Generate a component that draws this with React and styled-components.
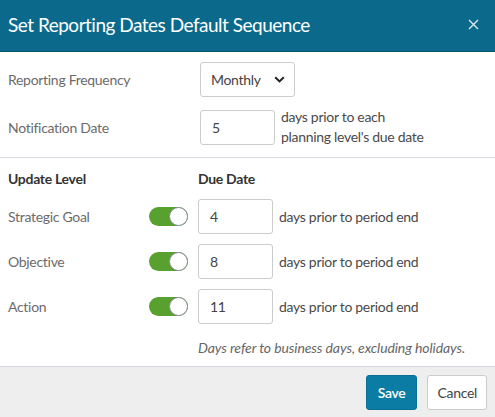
import React, { useState } from 'react';
import styled, { createGlobalStyle } from 'styled-components';

const GlobalStyle = createGlobalStyle`
  body {
    margin: 0;
    background: #fff;
    font-family: 'Source Sans Pro', Lato, 'Noto Sans', sans-serif;
    letter-spacing: -0.3px;
  }
  * {
    box-sizing: border-box;
  }
`;

const levels = [
  { name: 'Strategic Goal', days: '4' },
  { name: 'Objective', days: '8' },
  { name: 'Action', days: '11' },
];

const Toggle = ({ on, onChange }) => (
  <Switch type='button' $on={on} onClick={() => onChange(!on)}>
    <Knob $on={on} />
  </Switch>
);

const App = () => {
  const [frequency, setFrequency] = useState('Monthly');
  const [notify, setNotify] = useState('5');
  const [rows, setRows] = useState(levels.map((l) => ({ ...l, on: true })));

  const updateRow = (i, field, value) => {
    setRows(rows.map((r, j) => (j === i ? { ...r, [field]: value } : r)));
  };

  return (
    <>
      <GlobalStyle />
      <Modal>
        <Header>
          <Title>Set Reporting Dates Default Sequence</Title>
          <Close type='button' aria-label='Close'>
            <svg width='11' height='11' viewBox='0 0 11 11'>
              <path d='M1 1L10 10M10 1L1 10' stroke='currentColor' strokeWidth='1.4' />
            </svg>
          </Close>
        </Header>

        <TopSection>
          <FieldRow>
            <Label>Reporting Frequency</Label>
            <SelectWrap>
              <Select value={frequency} onChange={(e) => setFrequency(e.target.value)}>
                <option>Weekly</option>
                <option>Monthly</option>
                <option>Quarterly</option>
              </Select>
              <Chevron width='11' height='7' viewBox='0 0 11 7'>
                <path d='M1.2 1.2L5.5 5.4L9.8 1.2' fill='none' stroke='#222' strokeWidth='2' />
              </Chevron>
            </SelectWrap>
          </FieldRow>
          <FieldRow>
            <Label>Notification Date</Label>
            <Input value={notify} onChange={(e) => setNotify(e.target.value)} />
            <Hint>
              days prior to each
              <br />
              planning level's due date
            </Hint>
          </FieldRow>
        </TopSection>

        <LevelSection>
          <LevelGrid>
            <ColHead>Update Level</ColHead>
            <span />
            <ColHead>Due Date</ColHead>
            <span />
            {rows.map((r, i) => (
              <React.Fragment key={r.name}>
                <Label>{r.name}</Label>
                <Toggle on={r.on} onChange={(v) => updateRow(i, 'on', v)} />
                <Input value={r.days} onChange={(e) => updateRow(i, 'days', e.target.value)} />
                <Hint>days prior to period end</Hint>
              </React.Fragment>
            ))}
          </LevelGrid>
          <Note>Days refer to business days, excluding holidays.</Note>
        </LevelSection>

        <Footer>
          <Button $primary>Save</Button>
          <Button>Cancel</Button>
        </Footer>
      </Modal>
    </>
  );
};

const Modal = styled.div`
  width: 495px;
  height: 417px;
  display: flex;
  flex-direction: column;
  background: #fff;
  overflow: hidden;
`;

const Header = styled.div`
  height: 52px;
  flex-shrink: 0;
  display: flex;
  align-items: center;
  justify-content: space-between;
  padding: 0 14px 3px 8px;
  background: #0b6a8c;
  border-bottom: 1px solid #07536e;
`;

const Title = styled.h1`
  margin: 0;
  font-size: 19px;
  font-weight: 400;
  color: #fff;
  letter-spacing: -0.5px;
`;

const Close = styled.button`
  border: none;
  background: none;
  padding: 2px;
  color: rgba(255, 255, 255, 0.85);
  display: flex;
  cursor: pointer;
`;

const TopSection = styled.div`
  display: flex;
  flex-direction: column;
  gap: 10px;
  padding: 10px 8px 10px;
  border-bottom: 1px solid #d8d8e0;
`;

const FieldRow = styled.div`
  display: grid;
  grid-template-columns: 192px 75px 1fr;
  align-items: center;
`;

const Label = styled.span`
  font-size: 14px;
  color: #6b6b6b;
`;

const SelectWrap = styled.div`
  position: relative;
  width: 95px;
`;

const Select = styled.select`
  appearance: none;
  width: 95px;
  height: 35px;
  padding: 0 0 0 10px;
  border: 1px solid #ccc;
  border-radius: 3px;
  background: #fff;
  font-family: inherit;
  font-size: 14px;
  letter-spacing: inherit;
  color: #444;
  outline: none;
`;

const Chevron = styled.svg`
  position: absolute;
  right: 10px;
  top: 14px;
  pointer-events: none;
`;

const Input = styled.input`
  width: 75px;
  height: 35px;
  padding: 0 11px;
  border: 1px solid #ccc;
  border-radius: 3px;
  font-family: inherit;
  font-size: 14px;
  letter-spacing: inherit;
  color: #444;
  outline: none;
`;

const Hint = styled.span`
  padding-left: 6px;
  font-size: 14px;
  line-height: 20px;
  color: #4a4a4a;
`;

const LevelSection = styled.div`
  flex: 1;
  padding: 9px 8px 0;
`;

const LevelGrid = styled.div`
  display: grid;
  grid-template-columns: 141px 49px 75px 1fr;
  grid-template-rows: 22px repeat(3, 35px);
  row-gap: 10px;
  align-items: center;
`;

const ColHead = styled.span`
  font-size: 14px;
  font-weight: 700;
  color: #333;
`;

const Switch = styled.button`
  position: relative;
  width: 39px;
  height: 19px;
  padding: 0;
  border: none;
  border-radius: 10px;
  background: ${(p) => (p.$on ? '#58a12f' : '#ccc')};
  cursor: pointer;
`;

const Knob = styled.span`
  position: absolute;
  top: 0;
  left: ${(p) => (p.$on ? '20px' : '0')};
  width: 19px;
  height: 19px;
  border-radius: 50%;
  background: #fff;
  border: 1px solid #8a8f99;
`;

const Note = styled.p`
  margin: 15px 0 0 190px;
  font-size: 14px;
  font-style: italic;
  letter-spacing: -0.1px;
  color: #666;
`;

const Footer = styled.div`
  height: 51px;
  flex-shrink: 0;
  display: flex;
  justify-content: flex-end;
  align-items: center;
  gap: 10px;
  padding: 0 8px;
  background: #eeeeee;
  border-top: 1px solid #d8d8e0;
`;

const Button = styled.button`
  height: 35px;
  padding: 0 ${(p) => (p.$primary ? '11px' : '9px')};
  border: 1px solid ${(p) => (p.$primary ? '#0a6f92' : '#ccc')};
  border-radius: 3px;
  background: ${(p) => (p.$primary ? '#0b7ca3' : '#fff')};
  color: ${(p) => (p.$primary ? '#fff' : '#444')};
  font-family: inherit;
  font-size: 14px;
  letter-spacing: inherit;
  font-weight: ${(p) => (p.$primary ? 600 : 400)};
  cursor: pointer;
`;

export default App;
